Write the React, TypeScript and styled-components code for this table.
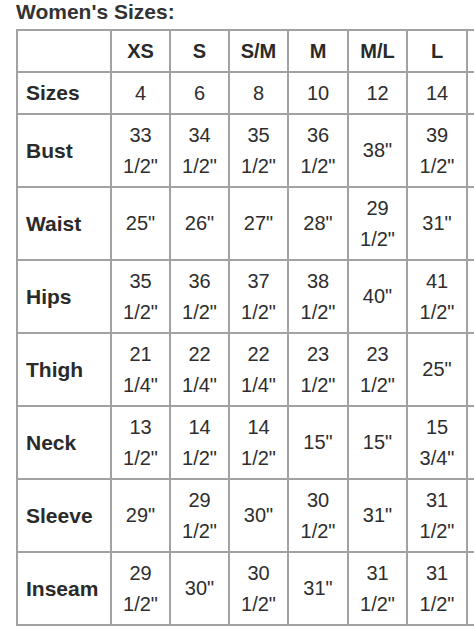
import styled, { createGlobalStyle } from "styled-components";

const GlobalStyle = createGlobalStyle`
  html, body {
    margin: 0;
    padding: 0;
    background: #fff;
    overflow: hidden;
  }
  body {
    font-family: "Liberation Sans", Arial, sans-serif;
    color: #2b2b2b;
  }
`;

type Row = { label: string; values: string[] };

// the last column (XL) is cut off by the edge of the screenshot
const sizes = ["XS", "S", "S/M", "M", "M/L", "L", ""];

const rows: Row[] = [
  { label: "Sizes", values: ["4", "6", "8", "10", "12", "14", ""] },
  { label: "Bust", values: ['33 1/2"', '34 1/2"', '35 1/2"', '36 1/2"', '38"', '39 1/2"', ""] },
  { label: "Waist", values: ['25"', '26"', '27"', '28"', '29 1/2"', '31"', ""] },
  { label: "Hips", values: ['35 1/2"', '36 1/2"', '37 1/2"', '38 1/2"', '40"', '41 1/2"', ""] },
  { label: "Thigh", values: ['21 1/4"', '22 1/4"', '22 1/4"', '23 1/2"', '23 1/2"', '25"', ""] },
  { label: "Neck", values: ['13 1/2"', '14 1/2"', '14 1/2"', '15"', '15"', '15 3/4"', ""] },
  { label: "Sleeve", values: ['29"', '29 1/2"', '30"', '30 1/2"', '31"', '31 1/2"', ""] },
  { label: "Inseam", values: ['29 1/2"', '30"', '30 1/2"', '31"', '31 1/2"', '31 1/2"', ""] },
];

export default function App() {
  return (
    <>
      <GlobalStyle />
      <Page>
        <Title>Women's Sizes:</Title>
        <Chart>
          <HeadCell />
          {sizes.map((s, i) => (
            <HeadCell key={"h" + i}>{s}</HeadCell>
          ))}
          {rows.map((row) => [
            <LabelCell key={row.label}>{row.label}</LabelCell>,
            ...row.values.map((v, i) => (
              <ValueCell key={row.label + i}>{v}</ValueCell>
            )),
          ])}
        </Chart>
      </Page>
    </>
  );
}

const Page = styled.div`
  padding-left: 16px;
  width: 600px;
`;

const Title = styled.h1`
  margin: 0;
  height: 29px;
  font-size: 21px;
  line-height: 24px;
  font-weight: bold;
  color: #333;
`;

const Chart = styled.div`
  display: grid;
  grid-template-columns: 92px 57px 57px 57px 58px 57px 58px 80px;
  grid-template-rows: 40px 40px repeat(7, 71px);
  gap: 2px;
  padding: 2px;
  width: max-content;
  background: #a2a2a2;
`;

const Cell = styled.div`
  background: #fff;
  display: flex;
  align-items: center;
`;

const HeadCell = styled(Cell)`
  justify-content: center;
  font-size: 20px;
  font-weight: bold;
  color: #2a2a2a;
`;

const LabelCell = styled(Cell)`
  padding-left: 8px;
  font-size: 21px;
  font-weight: bold;
  color: #2a2a2a;
`;

const ValueCell = styled(Cell)`
  justify-content: center;
  text-align: center;
  font-size: 20px;
  line-height: 31px;
  color: #2e2e2e;
`;
